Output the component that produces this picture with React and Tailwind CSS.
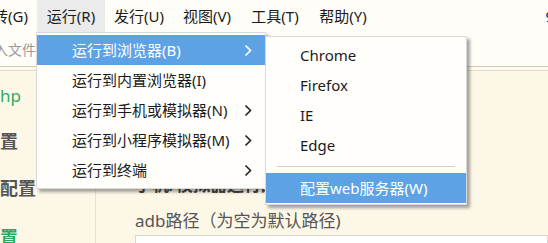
import React from 'react'

const font = "font-['Noto_Sans','Noto_Sans_CJK_SC',sans-serif]"

function Chevron({ color = '#222' }) {
  return (
    <svg width="8" height="13" viewBox="0 0 8 13" fill="none">
      <polyline points="1.5,1.5 6.5,6.5 1.5,11.5" stroke={color} strokeWidth="1.6" />
    </svg>
  )
}

const topMenus = ['跳转(G)', '运行(R)', '发行(U)', '视图(V)', '工具(T)', '帮助(Y)']

const runItems = [
  { label: '运行到浏览器(B)', sub: true, active: true },
  { label: '运行到内置浏览器(I)' },
  { label: '运行到手机或模拟器(N)', sub: true },
  { label: '运行到小程序模拟器(M)', sub: true },
  { label: '运行到终端', sub: true },
]

export default function App() {
  return (
    <div className={`relative w-[548px] h-[243px] overflow-hidden bg-[#fffdf7] text-[#1b1b1b] ${font}`}>
      {/* 菜单栏 */}
      <div className="flex h-[32px] items-center text-[15px] leading-none -ml-[31px]">
        {topMenus.map((m, i) => (
          <div
            key={m}
            className={`w-[68px] h-[32px] flex items-center justify-center shrink-0 ${i === 1 ? 'bg-[#ebebeb]' : ''}`}
          >
            {m}
          </div>
        ))}
        <div className="flex-1" />
        <div className="-mr-[6px]">9</div>
      </div>

      {/* 工具栏 */}
      <div className="h-[35px] flex items-center border-b border-[#d6cab2]">
        <span className="text-[14px] text-[#9a9a9a] -ml-[20px]">输入文件</span>
      </div>
      <div className="h-[4px] border-b border-[#e6dcc6] bg-[#fdfaf1]" />

      {/* 主体 */}
      <div className="flex h-[200px] bg-[#fdf7e7]">
        <div className="w-[96px] border-r border-[#ebe1cb] flex flex-col shrink-0 overflow-hidden">
          <div className="h-[44px] mt-[3px] flex items-center text-[17px] text-[#2fa866]">hp</div>
          <div className="h-[46px] flex items-center text-[18px] font-bold text-[#555]">
            <span className="-ml-[18px]">设置</span>
          </div>
          <div className="h-[48px] flex items-center text-[18px] font-bold text-[#555]">
            <span className="-ml-[36px]">运行配置</span>
          </div>
          <div className="h-[48px] mt-[1px] flex items-center text-[18px] font-bold text-[#2fa866]">
            <span className="-ml-[18px]">设置</span>
          </div>
        </div>
        <div className="flex-1 pl-[39px] pt-[104px]">
          <div className="text-[17px] font-bold text-[#444] leading-[20px]">手机/模拟器运行配置</div>
          <div className="mt-[16px] text-[17px] text-[#555] leading-[20px]">adb路径（为空为默认路径)</div>
          <div className="mt-[4px] h-[30px] bg-white border border-[#dcd6cb]" />
        </div>
      </div>

      {/* 运行 下拉菜单 */}
      <div className="absolute left-[36px] top-[32px] w-[230px] h-[157px] bg-[#fffefb] border border-[#d9d9d9] shadow-[3px_3px_3px_rgba(0,0,0,0.35)] pt-[2px] text-[15px]">
        {runItems.map((it) => (
          <div
            key={it.label}
            className={`h-[30px] flex items-center pl-[35px] pr-[13px] ${it.active ? 'bg-[#5ea2e6] text-white' : ''}`}
          >
            <span className="flex-1">{it.label}</span>
            {it.sub && <Chevron color={it.active ? '#fff' : '#222'} />}
          </div>
        ))}
      </div>

      {/* 浏览器 子菜单 */}
      <div className="absolute left-[265px] top-[36px] w-[202px] h-[169px] bg-[#fffefb] border border-[#d9d9d9] shadow-[3px_3px_3px_rgba(0,0,0,0.35)] pt-[3px] text-[15px]">
        {['Chrome', 'Firefox', 'IE', 'Edge'].map((b) => (
          <div key={b} className="h-[30px] flex items-center pl-[34px]">{b}</div>
        ))}
        <div className="h-[13px] flex items-center px-[11px]">
          <div className="h-px w-full bg-[#cfcfcf]" />
        </div>
        <div className="h-[30px] flex items-center pl-[34px] bg-[#5ea2e6] text-white">配置web服务器(W)</div>
      </div>
    </div>
  )
}
